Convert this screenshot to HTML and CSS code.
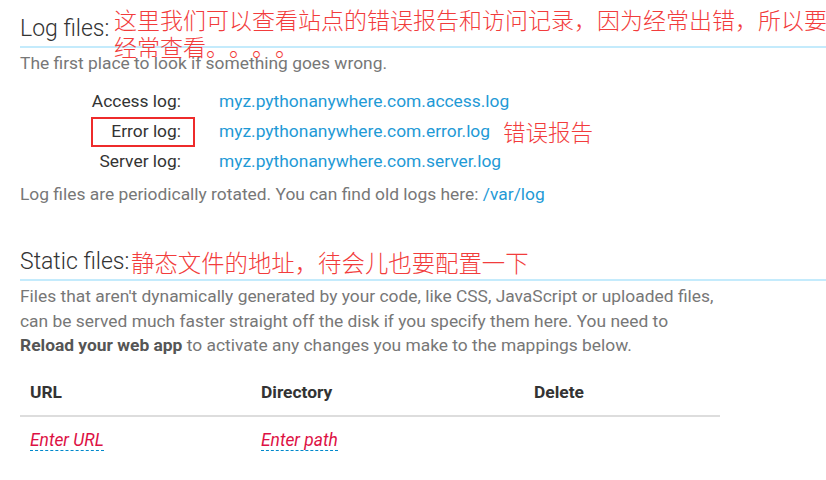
FILE: index.html
```html
<!DOCTYPE html>
<html lang="en">
   <head>
      <meta charset="UTF-8">
      <title>Web app - log files</title>
      <link rel="stylesheet" href="styles.css">
   </head>
   <body>
      <div class="page">
         <div class="section">
            <h2 class="title">Log files:</h2>
            <div class="note noteTop">这里我们可以查看站点的错误报告和访问记录，因为经常出错，所以要<br>经常查看。。。。</div>
            <p class="desc">The first place to look if something goes wrong.</p>
            <div class="logs">
               <div class="label">Access log:</div>
               <div class="value"><a href="#">myz.pythonanywhere.com.access.log</a></div>
               <div class="label marked">Error log:</div>
               <div class="value"><a href="#">myz.pythonanywhere.com.error.log</a><span class="noteInline">错误报告</span></div>
               <div class="label">Server log:</div>
               <div class="value"><a href="#">myz.pythonanywhere.com.server.log</a></div>
            </div>
            <p class="desc">Log files are periodically rotated. You can find old logs here: <a href="#">/var/log</a></p>
         </div>
         <div class="section static">
            <h2 class="title">Static files:</h2>
            <div class="note noteStatic">静态文件的地址，待会儿也要配置一下</div>
            <p class="desc long">Files that aren't dynamically generated by your code, like CSS, JavaScript or uploaded files,<br>can be served much faster straight off the disk if you specify them here. You need to<br><b>Reload your web app</b> to activate any changes you make to the mappings below.</p>
            <div class="mappings">
               <div class="th">URL</div>
               <div class="th">Directory</div>
               <div class="th">Delete</div>
               <div class="td"><span class="editable">Enter URL</span></div>
               <div class="td"><span class="editable">Enter path</span></div>
               <div class="td"></div>
            </div>
         </div>
      </div>
   </body>
</html>
```

FILE: styles.css
```css
body,html{
   margin:0;
   padding:0;
   background:#fff;
   font-family:Roboto, "Liberation Sans", sans-serif;
   font-size:17.4px;
   color:#333;
}
a{
   color:#1f9ad6;
   text-decoration:none;
}
.page{
   padding-left:20px;
   padding-top:14px;
}
.section{
   position:relative;
}
.static{
   margin-top:41px;
}
.title{
   margin:0;
   font-size:23px;
   font-weight:300;
   line-height:30px;
   padding-bottom:2px;
   border-bottom:2px solid #c4ebfc;
   color:#333;
}
.desc{
   margin:3px 0 0;
   line-height:24px;
   color:#777;
}
.long{
   margin-top:3px;
   line-height:24.5px;
}
.long b{
   color:#555;
}
.logs{
   display:grid;
   grid-template-columns:161px auto;
   column-gap:38px;
   margin:11px 0 6px;
}
.logs > div{
   line-height:30px;
   height:30px;
}
.label{
   text-align:right;
   color:#333;
   position:relative;
}
.marked::after{
   content:"";
   position:absolute;
   left:71px;
   right:-14px;
   top:1px;
   bottom:-1px;
   border:2px solid #ee2b2b;
}
.note{
   position:absolute;
   font-family:"Noto Sans CJK SC", sans-serif;
   font-size:23px;
   font-weight:300;
   line-height:27px;
   color:#f23c3c;
   white-space:nowrap;
   text-spacing-trim:space-all;
}
.noteTop{
   left:94px;
   top:-8px;
}
.noteStatic{
   left:111px;
   top:2px;
   font-size:23.4px;
}
.noteInline{
   font-family:"Noto Sans CJK SC", sans-serif;
   font-size:22.5px;
   font-weight:300;
   line-height:30px;
   color:#f23c3c;
   margin-left:13px;
   vertical-align:top;
}
.mappings{
   display:grid;
   grid-template-columns:231px 273px 196px;
   width:700px;
   margin-top:11px;
}
.th{
   font-weight:bold;
   color:#333;
   padding:11px 10px;
   line-height:24px;
   border-bottom:2px solid #ddd;
}
.td{
   padding:11px 10px;
   line-height:24px;
}
.editable{
   font-style:italic;
   color:#dd1144;
   border-bottom:1px dashed #0088cc;
}
```
